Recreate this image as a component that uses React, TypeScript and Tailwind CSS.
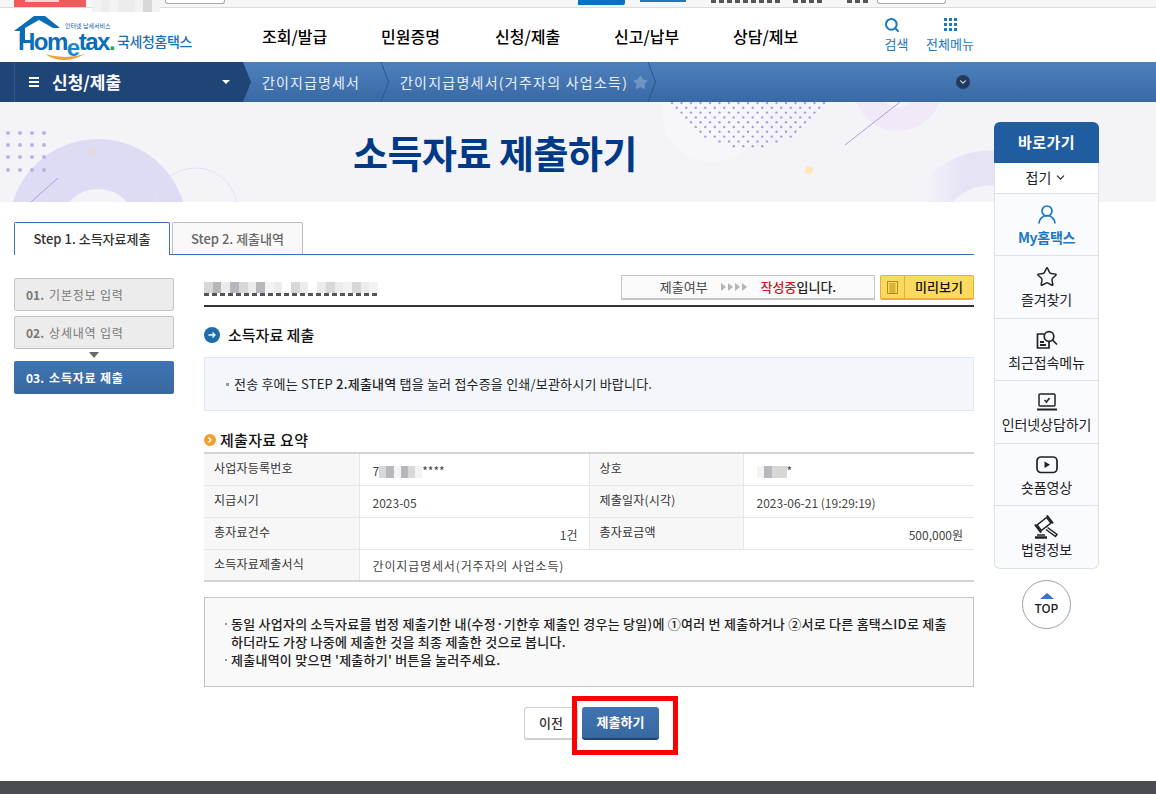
import React from 'react';
import { ChevronDown, Search, Star } from 'lucide-react';

const font = "font-['Noto_Sans_CJK_KR','Noto_Sans',sans-serif]";

const navItems = [
  { label: '조회/발급', cls: 'w-[119px]' },
  { label: '민원증명', cls: 'w-[114px]' },
  { label: '신청/제출', cls: 'w-[119px]' },
  { label: '신고/납부', cls: 'w-[119px]' },
  { label: '상담/제보', cls: 'w-[120px]' },
];

const Mosaic = ({ cells, className = '' }: { cells: string[]; className?: string }) => (
  <span className={`inline-flex align-middle ${className}`}>
    {cells.map((c, i) => (
      <span key={i} className={`h-full flex-1 ${c}`} />
    ))}
  </span>
);

const gray1 = 'bg-[#d8d8d8]';
const gray2 = 'bg-[#b9b7bd]';
const gray3 = 'bg-[#ececec]';
const gray4 = 'bg-[#f4f2f2]';

const HeroArt = () => {
  const dots: React.ReactNode[] = [];
  for (let row = 0; row < 10; row++) {
    for (let col = -10; col <= 10; col++) {
      const x = 748 + col * 9.5 + (row % 2 ? 4.75 : 0);
      const y = 103 + row * 4.8;
      if (Math.hypot(x - 748, y - 53) < 95) {
        dots.push(<circle key={`${row}-${col}`} cx={x} cy={y} r={1.2} fill="#a79be3" />);
      }
    }
  }
  const grid: React.ReactNode[] = [];
  [8, 20, 32, 44].forEach((x) =>
    [133, 145, 157, 170].forEach((y) => grid.push(<circle key={`${x}-${y}`} cx={x} cy={y} r={2} fill="#bbb0e6" />)),
  );
  return (
    <svg className="absolute inset-0" width="1156" height="100" viewBox="0 102 1156 100">
      <defs>
        <linearGradient id="fade" x1="0" x2="1" y1="0" y2="0">
          <stop offset="0" stopColor="#f4f4f8" />
          <stop offset="0.3" stopColor="#e6e3f5" />
        </linearGradient>
      </defs>
      <circle cx="98" cy="228" r="64" fill="none" stroke="#dedbf5" strokeWidth="50" />
      {grid}
      <circle cx="92" cy="152" r="4" fill="#e6d9dc" />
      <line x1="31" y1="202" x2="58" y2="178" stroke="#a99fe6" />
      <circle cx="195.5" cy="210" r="42" fill="none" stroke="#e3e0f8" />
      <circle cx="712" cy="112" r="50" fill="#f7f6fa" />
      {dots}
      <circle cx="898" cy="87" r="32" fill="none" stroke="#f1e9f8" strokeWidth="24" />
      <line x1="845" y1="145" x2="900" y2="102" stroke="#a99fe6" />
      <circle cx="809" cy="170" r="4" fill="#fce7b5" />
      <circle cx="990" cy="235" r="67" fill="none" stroke="url(#fade)" strokeWidth="35" />
    </svg>
  );
};

const Logo = () => (
  <div className="relative ml-[13px] h-[54px] w-[185px] shrink-0">
    <svg className="absolute left-0 top-[6px]" width="58" height="30" viewBox="0 0 58 30">
      <path d="M1 17 L21 2 L32 2 L47 14 L40 14 L26 6 L12 14 L12 28 L7 28 L7 17 Z" fill="#0a6db5" />
    </svg>
    <span className="absolute left-[52px] top-[14px] text-[6px] leading-[8px] text-[#0a5da5]">인터넷 납세서비스</span>
    <div className="absolute left-[5px] top-[22px] flex items-baseline font-['Liberation_Sans',sans-serif] text-[24px] font-bold leading-[24px] tracking-[-1.5px] text-[#0a6db5]">
      <span>Hom</span>
      <span className="relative top-[6px] text-[#1b86c9]">e</span>
      <span>tax</span>
      <span className="text-[#2aa84a]">.</span>
    </div>
    <svg className="absolute left-[30px] top-[44px]" width="44" height="12" viewBox="0 0 44 12">
      <path d="M2 2 Q20 14 42 2 Q22 8 2 2Z" fill="#efa23a" />
    </svg>
    <span className="absolute left-[104px] top-[23px] whitespace-nowrap text-[14px] font-medium leading-[20px] tracking-[-0.4px] text-[#1a6fb5]">
      국세청홈택스
    </span>
  </div>
);

const Chevron = ({ className }: { className: string }) => (
  <svg className={`absolute top-0 ${className}`} width="10" height="40" viewBox="0 0 10 40">
    <path d="M1 0 L8.5 20 L1 40" fill="none" stroke="#27568f" strokeWidth="1" />
  </svg>
);

const SideItem = ({ icon, label, active }: { icon: React.ReactNode; label: string; active?: boolean }) => (
  <div className="flex h-[62.5px] flex-col items-center border-t border-[#dfe1e6] pt-[9px]">
    <div className="flex h-[24px] items-center">{icon}</div>
    <span className={`whitespace-nowrap text-[14px] leading-[20px] tracking-[-0.1px] ${active ? 'font-semibold tracking-[-0.3px] text-[#1a78c2]' : 'text-[#222]'}`}>
      {label}
    </span>
  </div>
);

const SideMenu = () => (
  <div className="absolute left-[994px] top-[122px] w-[105px]">
    <div className="flex h-[41px] items-center justify-center rounded-t-[6px] bg-[#205ca0] text-[15px] font-bold tracking-[0.4px] text-white">바로가기</div>
    <div className="overflow-hidden rounded-b-[6px] border-x border-b border-[#dfe1e6] bg-[#fafbff]">
      <div className="flex h-[29.5px] items-center justify-center gap-[3px] bg-white text-[14px] text-[#222]">
        접기 <ChevronDown size={13} strokeWidth={2} />
      </div>
      <SideItem
        active
        label="My홈택스"
        icon={
          <svg width="18" height="19" viewBox="0 0 18 19" fill="none" stroke="#1a78c2" strokeWidth="1.7">
            <circle cx="9" cy="6" r="5" />
            <path d="M1 18.5 a8 8 0 0 1 16 0" />
          </svg>
        }
      />
      <SideItem label="즐겨찾기" icon={<Star size={22} strokeWidth={1.6} className="text-[#222]" />} />
      <SideItem
        label="최근접속메뉴"
        icon={
          <svg width="22" height="20" viewBox="0 0 22 20" fill="none" stroke="#222" strokeWidth="1.7">
            <path d="M8 4 H1.5 V18 H13 V12" />
            <circle cx="13" cy="6.5" r="4.8" />
            <path d="M16.5 10 L21 14.5" />
            <path d="M4 12 H8 M4 15 H10" strokeWidth="2" />
          </svg>
        }
      />
      <SideItem
        label="인터넷상담하기"
        icon={
          <svg width="22" height="18" viewBox="0 0 22 18" fill="none" stroke="#222" strokeWidth="1.5">
            <rect x="3" y="1" width="16" height="12" rx="1" />
            <path d="M1 16.5 H21" strokeWidth="2" />
            <path d="M8.5 7 L10.5 9 L13.5 5" />
          </svg>
        }
      />
      <SideItem
        label="숏폼영상"
        icon={
          <svg width="22" height="18" viewBox="0 0 22 18" fill="none">
            <rect x="1" y="1" width="20" height="15.5" rx="4" stroke="#222" strokeWidth="1.7" />
            <path d="M8.5 5.5 L14 8.8 L8.5 12 Z" fill="#222" />
          </svg>
        }
      />
      <SideItem
        label="법령정보"
        icon={
          <svg width="25" height="24" viewBox="0 0 25 24" fill="none" stroke="#222" strokeWidth="1.5">
            <g transform="rotate(-38 10 9)">
              <rect x="4" y="5.5" width="12" height="7" />
              <path d="M2.5 4 V14 M17.5 4 V14" strokeWidth="2" />
            </g>
            <path d="M13.5 12.5 L23 19.5 L21.5 21.5 L12 14.5" />
            <path d="M1 22.5 H13" strokeWidth="2.4" />
            <path d="M3 20 H11" />
          </svg>
        }
      />
    </div>
    <div className="mx-auto mt-[11px] flex h-[49px] w-[49px] flex-col items-center justify-center rounded-full border border-[#9aa0ac] bg-white">
      <span className="h-0 w-0 border-x-[7px] border-b-[6px] border-x-transparent border-b-[#3a74c4]" />
      <span className="mt-[2px] text-[12px] font-medium leading-[14px] text-[#222]">TOP</span>
    </div>
  </div>
);

const Row = ({ children, last }: { children: React.ReactNode; last?: boolean }) => (
  <tr className={`${last ? 'h-[31.5px] border-b-2 border-[#d4d4d4]' : 'h-[32px] border-b border-[#e6e6e6]'}`}>{children}</tr>
);

const Th = ({ children }: { children: React.ReactNode }) => (
  <th className="border-r border-[#e6e6e6] bg-[#f7f7f7] pb-[2px] pl-[10px] text-left text-[12px] font-normal tracking-[0.2px] text-[#333]">{children}</th>
);

const Td = ({ children, right, colSpan, className = '' }: { children: React.ReactNode; right?: boolean; colSpan?: number; className?: string }) => (
  <td colSpan={colSpan} className={`border-r border-[#e6e6e6] pt-[3px] text-[12px] text-[#444] last:border-r-0 ${right ? 'pr-[11px] text-right' : 'pl-[13px] text-left'} ${className}`}>
    {children}
  </td>
);

const Sliver = ({ className }: { className: string }) => (
  <div className={`h-[3px] bg-[repeating-linear-gradient(90deg,#555_0_5px,transparent_5px_8px)] ${className}`} />
);

export default function App() {
  return (
    <div className={`relative h-[794px] w-[1156px] overflow-hidden bg-white ${font}`}>
      {/* cut off utility strip */}
      <div className="flex h-[8px] items-start border-b border-[#dcdcdc] bg-[#f6f6f6]">
        <div className="ml-[14px] h-[7px] w-[72px] bg-[#ef5a5a] pl-[11px]">
          <div className="h-[2px] w-[34px] bg-[#fbd5d5]" />
        </div>
        <div className="ml-[79px] h-[4px] w-[60px] rounded-b-[3px] border border-t-0 border-[#aaa] bg-white" />
        <div className="ml-[353px] h-[5px] w-[47px] rounded-br-[2px] bg-[#0b72bb]" />
        <div className="ml-[15px] h-[2px] w-[46px] bg-[#1a78c2]" />
        <Sliver className="ml-[25px] w-[70px]" />
        <Sliver className="ml-[12px] w-[32px]" />
        <Sliver className="ml-[22px] w-[22px]" />
        <div className="ml-[8px] h-[4px] w-[69px] rounded-b-[3px] border border-t-0 border-[#aaa] bg-white" />
      </div>
      <Mosaic className="absolute left-[92px] top-0 h-[12px] w-[68px]" cells={[gray4, gray3, gray4, gray3, gray3, gray4, gray1, gray4]} />

      {/* header */}
      <div className="flex h-[54px] items-center bg-white">
        <Logo />
        <nav className="ml-[64px] flex shrink-0 pt-[2px]">
          {navItems.map((n) => (
            <span key={n.label} className={`${n.cls} text-[16px] font-medium leading-[22px] text-black`}>
              {n.label}
            </span>
          ))}
        </nav>
        <div className="ml-[27px] flex w-[33px] flex-col items-center text-[#1a78c2]">
          <Search size={16} strokeWidth={3} className="-translate-x-[5px]" />
          <span className="mt-[2px] whitespace-nowrap text-[13px] leading-[18px]">검색</span>
        </div>
        <div className="ml-[12px] flex w-[50px] flex-col items-center text-[#1a78c2]">
          <svg width="13" height="13" viewBox="0 0 13 13" fill="#1a78c2">
            {[0, 5, 10].map((x) => [0, 5, 10].map((y) => <rect key={`${x}${y}`} x={x} y={y} width="3" height="3" />))}
          </svg>
          <span className="mt-[4px] whitespace-nowrap text-[13px] leading-[18px]">전체메뉴</span>
        </div>
      </div>

      {/* location bar */}
      <div className="relative flex h-[40px] items-center bg-gradient-to-b from-[#4d81bc] to-[#3a69a5] text-white">
        <div className="flex h-full w-[243px] items-center bg-[#1f4476] pl-[29px]">
          <div className="flex w-[10px] flex-col gap-[2px]">
            <span className="h-[2px] w-[10px] bg-white" />
            <span className="h-[2px] w-[10px] bg-white" />
            <span className="h-[2px] w-[10px] bg-white" />
          </div>
          <span className="ml-[13px] text-[17px] font-semibold leading-[22px]">신청/제출</span>
          <span className="ml-[101px] h-0 w-0 border-x-[4px] border-t-[4px] border-x-transparent border-t-white" />
        </div>
        <div className="absolute left-[14px] top-0 h-full w-px bg-[#2f5a92]" />
        <svg className="absolute left-[243px] top-0" width="10" height="40" viewBox="0 0 10 40">
          <path d="M0 0 L8 20 L0 40 Z" fill="#1f4476" />
        </svg>
        <span className="ml-[19px] text-[14px] leading-[20px] tracking-[1.1px] text-[#e8f0fa]">간이지급명세서</span>
        <span className="ml-[40px] whitespace-nowrap text-[14px] leading-[20px] tracking-[1.25px] text-[#e8f0fa]">간이지급명세서(거주자의 사업소득)</span>
        <Star size={15} className="ml-[5px] fill-[#6f95c4] text-[#6f95c4]" />
        <Chevron className="left-[380px]" />
        <Chevron className="left-[647px]" />
        <span className="absolute left-[956px] top-[13px] flex h-[14px] w-[14px] items-center justify-center rounded-full bg-[#23395f]">
          <ChevronDown size={10} strokeWidth={2.5} className="text-white" />
        </span>
      </div>

      {/* page title */}
      <div className="relative h-[100px] bg-[#f4f4f8]">
        <HeroArt />
        <h1 className="absolute left-0 top-[24px] w-[990px] text-center text-[38px] font-bold leading-[52px] tracking-[-0.5px] text-[#003a86]">
          소득자료 제출하기
        </h1>
      </div>

      {/* tabs */}
      <div className="ml-[14px] mt-[20px] flex h-[33px] w-[960px] items-end border-b border-[#3b72b4]">
        <div className="relative top-[1px] flex h-[33px] w-[156px] items-center justify-center rounded-t-[2px] border border-b-0 border-[#3b72b4] bg-white text-[13px] font-medium text-[#333]">
          Step 1. 소득자료제출
        </div>
        <div className="ml-[2px] flex h-[32px] w-[131px] items-center justify-center rounded-t-[2px] border border-b-0 border-[#bdbdbd] bg-[#f9f9f9] text-[13px] font-medium text-[#666]">
          Step 2. 제출내역
        </div>
      </div>

      <div className="ml-[14px] flex w-[960px]">
        {/* step list */}
        <div className="mt-[23px] w-[160px] shrink-0">
          <div className="flex h-[33px] items-center rounded-[2px] border border-[#c4c4c4] bg-[#ececec] pl-[11px] text-[12px] tracking-[0.8px] text-[#777]">
            <b className="mr-[5px] font-bold tracking-normal">01.</b>기본정보 입력
          </div>
          <div className="mt-[5px] flex h-[33px] items-center rounded-[2px] border border-[#c4c4c4] bg-[#ececec] pl-[11px] text-[12px] tracking-[0.8px] text-[#777]">
            <b className="mr-[5px] font-bold tracking-normal">02.</b>상세내역 입력
          </div>
          <div className="mx-auto mb-[3px] mt-[3px] h-0 w-0 border-x-[5px] border-t-[6px] border-x-transparent border-t-[#666]" />
          <div className="flex h-[33px] items-center rounded-[2px] bg-gradient-to-b from-[#3f74b4] to-[#38689f] pl-[12px] text-[12px] font-bold tracking-[0.8px] text-white">
            <span className="mr-[5px] tracking-normal">03.</span>소득자료 제출
          </div>
        </div>

        {/* main column */}
        <div className="ml-[30px] w-[770px]">
          <div className="mt-[20px] flex h-[32px] items-start justify-between border-b-[2px] border-[#333]">
            <div className="mt-[7px] flex w-[174px] flex-col">
              <Mosaic className="h-[11px] w-full" cells={[gray1, gray2, gray3, gray2, gray1, gray3, gray2, gray4, gray3, 'bg-white', gray1, gray3, 'bg-white', gray3, gray1, gray3, gray4, gray1, gray3, gray4]} />
              <Sliver className="w-full" />
            </div>
            <div className="flex">
              <div className="flex h-[25px] w-[254px] items-center justify-center border border-b-2 border-[#c4c4c4] bg-[#fafafa] text-[13px] leading-[16px]">
                <span className="text-[#444]">제출여부</span>
                <svg className="mx-[13px]" width="27" height="8" viewBox="0 0 27 8" fill="#b5b5b5">
                  {[0, 7, 14, 21].map((x) => <path key={x} d={`M${x} 0 L${x + 5} 4 L${x} 8 Z`} />)}
                </svg>
                <span className="font-medium text-[#c4161c]">작성중</span>
                <span className="font-medium text-[#222]">입니다.</span>
              </div>
              <div className="ml-[5px] flex h-[25px] w-[94px] items-center rounded-[2px] border border-b-2 border-[#e8b02e] bg-[#fcd95f] text-[13px] font-medium text-[#111]">
                <span className="flex h-full w-[24px] items-center justify-center border-r border-[#e8b02e]">
                  <svg width="11" height="13" viewBox="0 0 11 13" fill="none" stroke="#b88a10">
                    <rect x="0.5" y="0.5" width="10" height="12" />
                    <path d="M2.5 3 H8.5 M2.5 5 H8.5 M2.5 7 H8.5 M2.5 9 H8.5 M2.5 11 H8.5" />
                  </svg>
                </span>
                <span className="flex-1 text-center">미리보기</span>
              </div>
            </div>
          </div>

          <div className="mt-[18px] flex h-[20px] items-center">
            <svg width="16" height="16" viewBox="0 0 16 16">
              <circle cx="8" cy="8" r="8" fill="#1f6ca8" />
              <path d="M4.5 8 H11 M8.5 5.5 L11 8 L8.5 10.5" stroke="#fff" strokeWidth="1.3" fill="none" />
            </svg>
            <span className="ml-[8px] text-[15px] font-medium leading-[20px] text-[#111]">소득자료 제출</span>
          </div>

          <div className="mt-[12px] flex h-[54px] items-center border border-[#e1e5ee] bg-[#f3f6fb] pl-[21px] text-[13px] leading-[18px] tracking-[0.2px] text-[#222]">
            <span className="mr-[5px] h-[3px] w-[3px] bg-[#999]" />
            전송 후에는 STEP&nbsp;<b className="font-medium">2.제출내역</b>&nbsp;탭을 눌러 접수증을 인쇄/보관하시기 바랍니다.
          </div>

          <div className="mt-[19px] flex h-[20px] items-center">
            <svg width="12" height="12" viewBox="0 0 12 12">
              <circle cx="6" cy="6" r="6" fill="#f0a030" />
              <path d="M4.5 3.5 L7 6 L4.5 8.5" stroke="#fff" strokeWidth="1.4" fill="none" />
            </svg>
            <span className="ml-[4px] text-[15px] font-medium leading-[20px] tracking-[0.3px] text-[#111]">제출자료 요약</span>
          </div>

          <table className="mt-[2px] w-full table-fixed border-collapse border-t-2 border-[#d4d4d4]">
            <colgroup>
              <col className="w-[155px]" />
              <col className="w-[230px]" />
              <col className="w-[154px]" />
              <col className="w-[231px]" />
            </colgroup>
            <tbody>
              <Row>
                <Th>사업자등록번호</Th>
                <Td>
                  7<Mosaic className="h-[12px] w-[43px]" cells={[gray1, gray2, gray4, gray2, gray1, gray4]} />****
                </Td>
                <Th>상호</Th>
                <Td>
                  <Mosaic className="h-[12px] w-[30px]" cells={[gray4, gray2, gray1, gray1]} />*
                </Td>
              </Row>
              <Row>
                <Th>지급시기</Th>
                <Td>2023-05</Td>
                <Th>제출일자(시각)</Th>
                <Td>2023-06-21 (19:29:19)</Td>
              </Row>
              <Row>
                <Th>총자료건수</Th>
                <Td right>1건</Td>
                <Th>총자료금액</Th>
                <Td right>500,000원</Td>
              </Row>
              <Row last>
                <Th>소득자료제출서식</Th>
                <Td colSpan={3} className="tracking-[0.85px]">간이지급명세서(거주자의 사업소득)</Td>
              </Row>
            </tbody>
          </table>

          <div className="mt-[15px] h-[90px] border border-[#c4c4c4] bg-[#f9f9f9] pl-[20px] pt-[17px] text-[13px] font-medium leading-[18px] tracking-[0.25px] text-[#222]">
            <p className="relative whitespace-nowrap pl-[6px] before:absolute before:left-0 before:top-[8px] before:h-[2px] before:w-[2px] before:bg-[#999]">
              동일 사업자의 소득자료를 법정 제출기한 내(수정·기한후 제출인 경우는 당일)에 ①여러 번 제출하거나 ②서로 다른 홈택스ID로 제출
              <br />
              하더라도 가장 나중에 제출한 것을 최종 제출한 것으로 봅니다.
            </p>
            <p className="relative pl-[6px] before:absolute before:left-0 before:top-[8px] before:h-[2px] before:w-[2px] before:bg-[#999]">
              제출내역이 맞으면 '제출하기' 버튼을 눌러주세요.
            </p>
          </div>

          <div className="mt-[20px] flex justify-center pl-[5px]">
            <button className="h-[33px] w-[54px] rounded-[3px] border border-b-2 border-[#cfcfcf] bg-white text-[13px] font-medium text-[#333]">이전</button>
            <div className="relative ml-[4px]">
              <button className="h-[33px] w-[77px] rounded-[3px] border-b-2 border-[#1f4476] bg-gradient-to-b from-[#3f74b4] to-[#38689f] text-[13px] font-bold text-white">제출하기</button>
              <div className="pointer-events-none absolute left-[-10px] top-[-11px] h-[59px] w-[106px] border-[5px] border-[#ff0000]" />
            </div>
          </div>
        </div>
      </div>

      <SideMenu />

      <div className="absolute bottom-0 left-0 h-[13px] w-full bg-[#4a4a52]" />
    </div>
  );
}
